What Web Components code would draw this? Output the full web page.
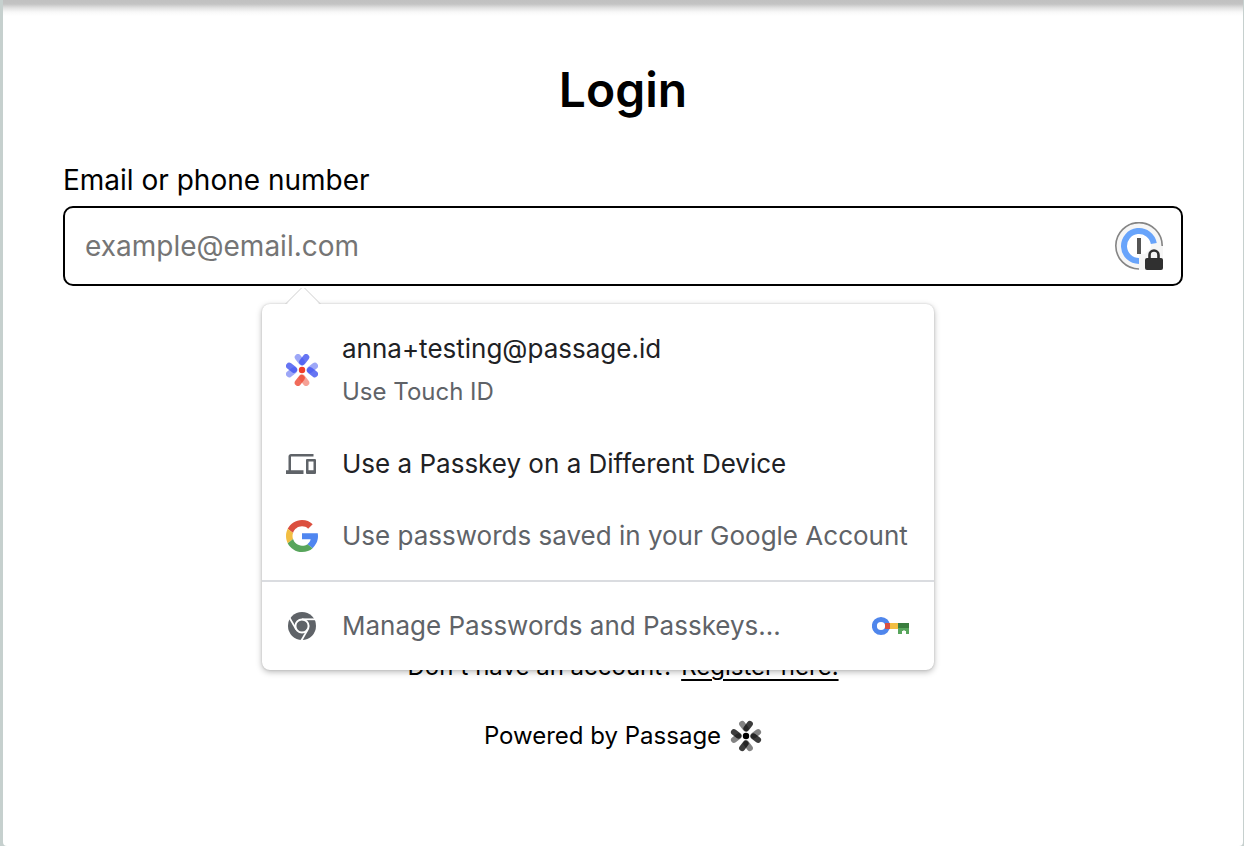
<!DOCTYPE html>
<html lang="en">
<head>
<meta charset="utf-8">
<title>Login</title>
<style>
  html, body { margin: 0; min-height: 100%; }
  body {
    display: flex;
    min-height: 100vh;
    background: #c6d0ce;
    color: #000;
    font-family: Inter, "Liberation Sans", sans-serif;
  }
</style>
</head>
<body>
<login-card>
  <account-field label="Email or phone number" placeholder="example@email.com">
    <passkey-menu slot="menu">
      <menu-entry icon="passage" tall>anna+testing@passage.id<span slot="detail">Use Touch ID</span></menu-entry>
      <menu-entry icon="devices">Use a Passkey on a Different Device</menu-entry>
      <menu-entry icon="google" muted>Use passwords saved in your Google Account</menu-entry>
      <menu-entry slot="footer" icon="chrome" muted>Manage Passwords and Passkeys...<app-icon slot="end" name="key"></app-icon></menu-entry>
    </passkey-menu>
  </account-field>
  <login-footer slot="footer"></login-footer>
</login-card>

<script>
const petals = (colors) => colors.map((c, i) => `
  <g transform="rotate(${i * 90})" stroke="${c}" stroke-width="6.4" stroke-linecap="round">
    <path d="M-.4 -8L-4.1 -12.8" opacity=".52"/><path d="M.4 -8L4.1 -12.8" opacity=".82"/>
  </g>`).join('');

const ICONS = {
  passage: [32, 32, '-16 -16 32 32', petals(['#4457f0', '#4457f0', '#ee4a36', '#4457f0']) + '<circle r="3.2" fill="#f03e2a"/>'],
  passageMono: [32, 32, '-17 -17 34 34', petals(['#111', '#111', '#111', '#111']) + '<circle r="3.4" fill="#000"/>'],
  devices: [30, 30, '0 0 24 24', '<path fill="#5f6368" d="M4 6h18V4H4c-1.1 0-2 .9-2 2v11H0v3h14v-3H4V6zm19 2h-6c-.55 0-1 .45-1 1v10c0 .55.45 1 1 1h6c.55 0 1-.45 1-1V9c0-.55-.45-1-1-1zm-1 9h-4v-7h4v7z"/>'],
  google: [32, 32, '0 0 48 48', `
    <path fill="#db4f3f" d="M24 9.5c3.54 0 6.71 1.22 9.21 3.6l6.85-6.85C35.9 2.38 30.47 0 24 0 14.62 0 6.51 5.38 2.56 13.22l7.98 6.19C12.43 13.72 17.74 9.5 24 9.5z"/>
    <path fill="#4f86f0" d="M48 24.550c0-1.570-.15-3.090-.38-4.550H24v9.020h12.940c-.58 2.960-2.260 5.480-4.780 7.180l7.730 6c4.510-4.180 8.110-10.360 8.110-17.650z"/>
    <path fill="#f2be42" d="M10.53 28.59c-.48-1.45-.76-2.99-.76-4.59s.27-3.14.76-4.59l-7.98-6.19C.92 16.46 0 20.12 0 24c0 3.88.92 7.54 2.56 10.78l7.97-6.19z"/>
    <path fill="#58a55c" d="M24 48c6.48 0 11.93-2.13 15.89-5.81l-7.73-6c-2.15 1.45-4.92 2.3-8.16 2.3-6.26 0-11.57-4.22-13.47-9.91l-7.98 6.19C6.51 42.62 14.62 48 24 48z"/>`],
  chrome: [32, 32, '-16 -16 32 32', `
    <circle r="14" fill="#5f6368"/>
    <circle r="6.6" stroke="#fff" stroke-width="2"/>
    <g stroke="#fff" stroke-width="1.8">
      <path d="M0 -6.7H14"/><path d="M0 -6.7H14" transform="rotate(120)"/><path d="M0 -6.7H14" transform="rotate(240)"/>
    </g>`],
  key: [38, 20, '0 0 38 20', `
    <circle cx="9" cy="10" r="6.6" stroke="#4f86ec" stroke-width="5"/>
    <path fill="#d9503f" d="M13 7h6v6h-6z"/><path fill="#f2be42" d="M18 7h9v6h-9z"/>
    <path fill="#58a55c" d="M26 12h11v6h-3v-3h-1l-1-1-1 1h-1v3h-4z"/><path fill="#3a7d3e" d="M26 7h11v5H26z"/>`],
  onepassword: [48, 48, '0 0 48 48', `
    <circle cx="24" cy="24" r="23" fill="#f6f6f6"/>
    <path d="M24 47A23.2 23.2 0 1 1 47.2 24" stroke="#858585" stroke-width="1.6"/>
    <circle cx="24" cy="24" r="12" fill="#fff"/>
    <path d="M24 39A15 15 0 1 1 38.8 21.5" stroke="#68a4fb" stroke-width="6"/>
    <path fill="#f6f6f6" d="M24 32h6l8-8h10v24H24z"/>
    <path fill="#555" d="M22 16h4v16h-4z"/>
    <rect x="30" y="36" width="18" height="12" rx="2" fill="#303030"/>
    <path d="M34.5 37v-4a4.500 4.500 0 0 1 9 0v4" stroke="#303030" stroke-width="2.600"/>`],
};

class AppIcon extends HTMLElement {
  constructor() { super(); this.attachShadow({ mode: 'open' }); }
  connectedCallback() {
    const [w, h, box, body] = ICONS[this.getAttribute('name')];
    this.shadowRoot.innerHTML = `
      <style>:host { display: inline-flex; flex: none; } svg { display: block; }</style>
      <svg width="${w}" height="${h}" viewBox="${box}" fill="none" aria-hidden="true">${body}</svg>`;
  }
}

class LoginCard extends HTMLElement {
  constructor() {
    super();
    this.attachShadow({ mode: 'open' }).innerHTML = `
      <style>
        :host { display: block; flex: 1; margin: 0 1px 0 3px; }
        main {
          box-sizing: border-box; min-height: 100vh; padding: 60px;
          border-radius: 0 0 4px 4px;
          background: linear-gradient(#c0c0c0, #c3c3c3 4px, #e2e2e2 8px, #f8f8f8 12px, #fff 16px) no-repeat 0 0 / 100% 16px, #fff;
        }
        h1 { margin: 0 0 42px; font-size: 48px; line-height: 60px; font-weight: 600; text-align: center; }
      </style>
      <main><h1>Login</h1><slot></slot><slot name="footer"></slot></main>`;
  }
}

class AccountField extends HTMLElement {
  constructor() { super(); this.attachShadow({ mode: 'open' }); }
  connectedCallback() {
    this.shadowRoot.innerHTML = `
      <style>
        :host { display: flex; flex-direction: column; gap: 8px; position: relative; }
        label { font-size: 28px; line-height: 36px; }
        .box {
          display: flex; align-items: center; box-sizing: border-box; height: 80px;
          padding: 0 18px 0 20px; border: 2px solid #000; border-radius: 10px; background: #fff;
        }
        input { flex: 1; min-width: 0; padding: 0; border: 0; outline: 0; background: none; font: inherit; font-size: 28px; color: #000; }
        input::placeholder { color: #757575; opacity: 1; }
        ::slotted([slot=menu]) { position: absolute; top: 100%; left: 199px; }
      </style>
      <label for="account">${this.getAttribute('label')}</label>
      <div class="box">
        <input id="account" type="text" placeholder="${this.getAttribute('placeholder')}">
        <app-icon name="onepassword"></app-icon>
      </div>
      <slot name="menu"></slot>`;
  }
}

class PasskeyMenu extends HTMLElement {
  constructor() {
    super();
    this.attachShadow({ mode: 'open' }).innerHTML = `
      <style>
        :host { display: block; width: 672px; padding-top: 18px; }
        .panel { border-radius: 8px; background: #fff; box-shadow: 0 2px 6px rgba(0,0,0,.28), 0 0 2px rgba(0,0,0,.16); }
        .list, .foot { padding: 8px 0; }
        .foot { border-top: 2px solid #dadce0; }
        svg { position: absolute; top: 2px; left: 22px; }
      </style>
      <div class="panel">
        <div class="list"><slot></slot></div>
        <div class="foot"><slot name="footer"></slot></div>
      </div>
      <svg width="38" height="18" viewBox="0 0 38 18" aria-hidden="true">
        <path fill="#fff" d="M1 18L19 0l18 18z"/>
        <path fill="none" stroke="#d0d0d0" d="M1.500 16L17.500 0M20.500 0l16 16"/>
      </svg>`;
  }
}

class MenuEntry extends HTMLElement {
  constructor() { super(); this.attachShadow({ mode: 'open' }); }
  connectedCallback() {
    this.shadowRoot.innerHTML = `
      <style>
        :host { display: block; color: #202124; }
        :host([muted]) { color: #5f6368; }
        button {
          display: flex; align-items: center; gap: 24px; box-sizing: border-box; width: 100%; height: 72px;
          padding: 0 24px; border: 0; background: none; color: inherit; font: inherit;
          font-size: 26px; line-height: 36px; text-align: left; white-space: nowrap;
        }
        :host([tall]) button { height: 116px; }
        .icon { display: flex; width: 32px; }
        .text { display: flex; flex-direction: column; gap: 7px; flex: 1; }
        ::slotted([slot=detail]) { color: #5f6368; font-size: 24px; }
      </style>
      <button type="button">
        <span class="icon"><app-icon name="${this.getAttribute('icon')}"></app-icon></span>
        <span class="text"><span><slot></slot></span><slot name="detail"></slot></span>
        <slot name="end"></slot>
      </button>`;
  }
}

class LoginFooter extends HTMLElement {
  constructor() {
    super();
    this.attachShadow({ mode: 'open' }).innerHTML = `
      <style>
        :host { display: block; margin-top: 363px; font-size: 24px; line-height: 36px; text-align: center; }
        p { margin: 0 0 33px; }
        a { color: inherit; text-underline-offset: 4px; text-decoration-thickness: 2px; }
        .powered { display: flex; align-items: center; justify-content: center; gap: 9px; margin: 0; }
      </style>
      <p>Don't have an account? <a href="#register">Register here.</a></p>
      <p class="powered">Powered by Passage <app-icon name="passageMono"></app-icon></p>`;
  }
}

customElements.define('app-icon', AppIcon);
customElements.define('login-card', LoginCard);
customElements.define('account-field', AccountField);
customElements.define('passkey-menu', PasskeyMenu);
customElements.define('menu-entry', MenuEntry);
customElements.define('login-footer', LoginFooter);
</script>
</body>
</html>
